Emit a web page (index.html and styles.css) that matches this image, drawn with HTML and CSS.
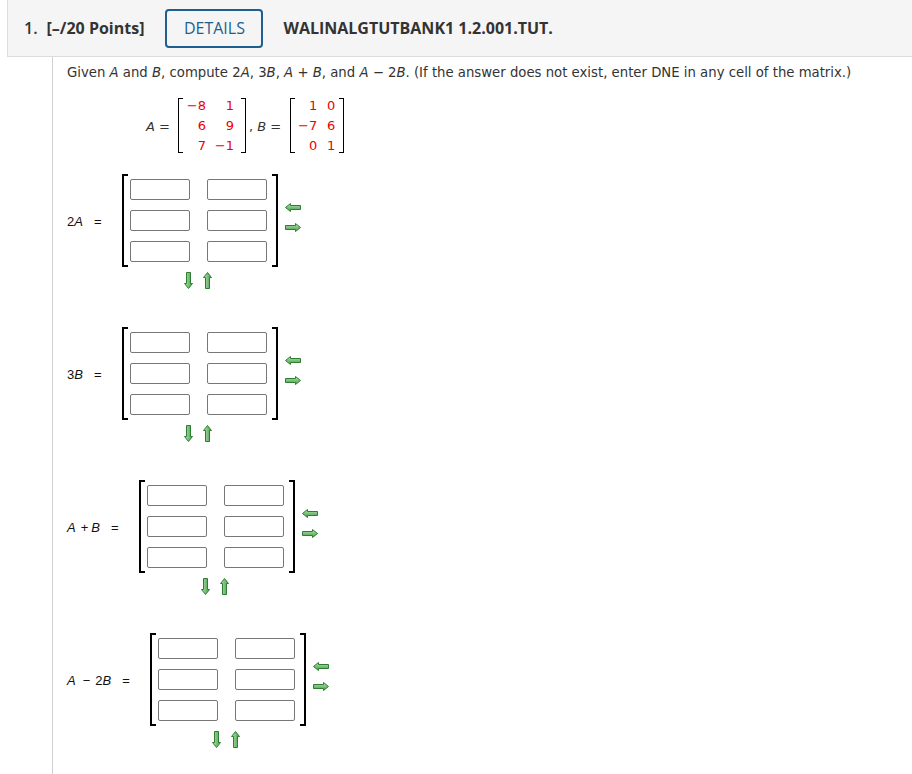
FILE: index.html
```html
<!DOCTYPE html>
<html>
<head>
<meta charset="utf-8">
<link rel="stylesheet" href="styles.css">
</head>
<body>
<svg class="defs" width="0" height="0">
  <defs>
    <linearGradient id="gh" x1="0" y1="0" x2="0" y2="1">
      <stop offset="0" stop-color="#b8e6b0"/>
      <stop offset="1" stop-color="#3f9a45"/>
    </linearGradient>
    <linearGradient id="gv" x1="0" y1="0" x2="1" y2="0">
      <stop offset="0" stop-color="#b8e6b0"/>
      <stop offset="1" stop-color="#3f9a45"/>
    </linearGradient>
    <symbol id="arr-left" viewBox="0 0 16 9"><path d="M0.5 4.5 L5.5 0.5 L5.5 2.5 L15.5 2.5 L15.5 6.5 L5.5 6.5 L5.5 8.5 Z" fill="url(#gh)" stroke="#2f7d33" stroke-width="1"/></symbol>
    <symbol id="arr-right" viewBox="0 0 16 9"><path d="M15.5 4.5 L10.5 0.5 L10.5 2.5 L0.5 2.5 L0.5 6.5 L10.5 6.5 L10.5 8.5 Z" fill="url(#gh)" stroke="#2f7d33" stroke-width="1"/></symbol>
    <symbol id="arr-down" viewBox="0 0 9 17"><path d="M4.5 16.5 L0.5 11.5 L2.5 11.5 L2.5 0.5 L6.5 0.5 L6.5 11.5 L8.5 11.5 Z" fill="url(#gv)" stroke="#2f7d33" stroke-width="1"/></symbol>
    <symbol id="arr-up" viewBox="0 0 9 17"><path d="M4.5 0.5 L0.5 5.5 L2.5 5.5 L2.5 16.5 L6.5 16.5 L6.5 5.5 L8.5 5.5 Z" fill="url(#gv)" stroke="#2f7d33" stroke-width="1"/></symbol>
  </defs>
</svg>

<div class="header">
  <span class="num">1.</span>
  <span class="points">[–/20 Points]</span>
  <span class="details">DETAILS</span>
  <span class="code">WALINALGTUTBANK1 1.2.001.TUT.</span>
</div>

<div class="content">
  <p class="question">Given <i>A</i> and <i>B</i>, compute 2<i>A</i>, 3<i>B</i>, <i>A</i> + <i>B</i>, and <i>A</i> − 2<i>B</i>. (If the answer does not exist, enter DNE in any cell of the matrix.)</p>

  <div class="given">
    <span class="glabel"><i>A</i> =</span>
    <div class="gmatrix">
      <span class="gbr gbr-l"></span>
      <div class="gcells ga">
        <span>−8</span><span>1</span>
        <span>6</span><span>9</span>
        <span>7</span><span>−1</span>
      </div>
      <span class="gbr gbr-r"></span>
    </div>
    <span class="glabel comma">, <i>B</i> =</span>
    <div class="gmatrix">
      <span class="gbr gbr-l"></span>
      <div class="gcells gb">
        <span>1</span><span>0</span>
        <span>−7</span><span>6</span>
        <span>0</span><span>1</span>
      </div>
      <span class="gbr gbr-r"></span>
    </div>
  </div>

  <div class="answer">
    <span class="alabel">2<i>A</i><span class="eq">=</span></span>
    <div class="matrix">
      <span class="br br-l"></span>
      <div class="cells">
        <input><input><input><input><input><input>
      </div>
      <span class="br br-r"></span>
    </div>
    <div class="side"><svg class="h"><use href="#arr-left"/></svg><svg class="h"><use href="#arr-right"/></svg></div>
    <div class="bottom"><svg class="v"><use href="#arr-down"/></svg><svg class="v"><use href="#arr-up"/></svg></div>
  </div>

  <div class="answer">
    <span class="alabel">3<i>B</i><span class="eq">=</span></span>
    <div class="matrix">
      <span class="br br-l"></span>
      <div class="cells">
        <input><input><input><input><input><input>
      </div>
      <span class="br br-r"></span>
    </div>
    <div class="side"><svg class="h"><use href="#arr-left"/></svg><svg class="h"><use href="#arr-right"/></svg></div>
    <div class="bottom"><svg class="v"><use href="#arr-down"/></svg><svg class="v"><use href="#arr-up"/></svg></div>
  </div>

  <div class="answer">
    <span class="alabel"><i>A</i><span class="op">+</span><i>B</i><span class="eq">=</span></span>
    <div class="matrix">
      <span class="br br-l"></span>
      <div class="cells">
        <input><input><input><input><input><input>
      </div>
      <span class="br br-r"></span>
    </div>
    <div class="side"><svg class="h"><use href="#arr-left"/></svg><svg class="h"><use href="#arr-right"/></svg></div>
    <div class="bottom"><svg class="v"><use href="#arr-down"/></svg><svg class="v"><use href="#arr-up"/></svg></div>
  </div>

  <div class="answer">
    <span class="alabel"><i>A</i><span class="op minus">−</span>2<i>B</i><span class="eq">=</span></span>
    <div class="matrix">
      <span class="br br-l"></span>
      <div class="cells">
        <input><input><input><input><input><input>
      </div>
      <span class="br br-r"></span>
    </div>
    <div class="side"><svg class="h"><use href="#arr-left"/></svg><svg class="h"><use href="#arr-right"/></svg></div>
    <div class="bottom"><svg class="v"><use href="#arr-down"/></svg><svg class="v"><use href="#arr-up"/></svg></div>
  </div>
</div>
</body>
</html>
```

FILE: styles.css
```css
html, body {
  margin: 0;
  padding: 0;
  background: #fff;
  height: 100%;
}
body {
  font-family: "Open Sans", "Liberation Sans", sans-serif;
  color: #333;
  overflow: hidden;
}
.defs {
  position: absolute;
  width: 0;
  height: 0;
}

.header {
  margin-left: 7px;
  height: 57px;
  box-sizing: border-box;
  background: #f5f5f5;
  border-left: 1px solid #dcdcdc;
  border-bottom: 1px solid #dcdcdc;
  display: flex;
  align-items: center;
  padding-left: 16px;
  font-size: 16px;
  font-weight: 600;
  color: #333;
}
.num {
  margin-right: 9px;
}
.points {
  font-weight: 700;
  margin-right: 21px;
}
.details {
  display: inline-flex;
  align-items: center;
  justify-content: center;
  width: 98px;
  height: 39px;
  box-sizing: border-box;
  border: 2px solid #1d5f8f;
  border-radius: 4px;
  color: #1d5f8f;
  font-weight: 500;
  font-size: 16px;
  margin-right: 20px;
}
.code {
  font-weight: 700;
}

.content {
  margin-left: 52px;
  border-left: 1px solid #d0d0d0;
  padding-left: 14px;
  height: calc(100% - 57px);
  box-sizing: border-box;
  font-family: "DejaVu Sans", Verdana, sans-serif;
  font-size: 13.25px;
  color: #333;
}
.question {
  margin: 0;
  padding-top: 8px;
  line-height: 16px;
  white-space: nowrap;
}
.question i {
  font-style: oblique;
}

.given {
  display: flex;
  align-items: center;
  margin-top: 15px;
  margin-left: 79px;
  font-size: 13px;
}
.glabel {
  margin-right: 8px;
}
.glabel i { font-style: oblique; }
.comma {
  margin-left: 3px;
  margin-right: 9px;
}
.gmatrix {
  display: flex;
  align-items: stretch;
}
.gbr {
  width: 4px;
  border: 1.5px solid #000;
  margin: 2px 0 3px;
}
.gbr-l { border-right: none; }
.gbr-r { border-left: none; }
.gcells {
  display: grid;
  grid-auto-rows: 20px;
  line-height: 20px;
  color: #e00;
  text-align: right;
}
.ga {
  grid-template-columns: 23px 28px;
  padding-right: 7px;
}
.gb {
  grid-template-columns: 22px 18px;
  padding-right: 4px;
}

.answer {
  display: grid;
  grid-template-columns: auto auto auto;
  justify-content: start;
  align-items: center;
  margin-top: 18px;
}
.answer + .answer {
  margin-top: 38px;
}
.alabel {
  font-family: "Liberation Sans", Arial, sans-serif;
  font-size: 13px;
  color: #111;
  margin-right: 20px;
  padding-top: 2px;
}
.alabel i { font-style: italic; }
.op {
  margin: 0 3px 0 5px;
}
.op.minus {
  margin: 0 5px 0 7px;
}
.eq {
  margin-left: 11px;
}
.matrix {
  display: flex;
  align-items: stretch;
}
.br {
  width: 4px;
  border: 2px solid #000;
}
.br-l { border-right: none; margin-right: 2px; }
.br-r { border-left: none; margin-left: 5px; }
.cells {
  display: grid;
  grid-template-columns: 60px 60px;
  grid-auto-rows: 21px;
  column-gap: 17px;
  row-gap: 10px;
  padding: 5px 0;
}
.cells input {
  width: 60px;
  height: 21px;
  box-sizing: border-box;
  margin: 0;
  padding: 0;
  border: 1px solid #777;
  border-radius: 2px;
  background: #fff;
}
.side {
  display: flex;
  flex-direction: column;
  gap: 11px;
  margin-left: 7px;
  margin-top: -6px;
}
.h {
  width: 16px;
  height: 9px;
  display: block;
}
.bottom {
  grid-column: 2;
  display: flex;
  justify-content: center;
  gap: 10px;
  margin-top: 5px;
  margin-left: -3px;
}
.v {
  width: 9px;
  height: 17px;
  display: block;
}
```
